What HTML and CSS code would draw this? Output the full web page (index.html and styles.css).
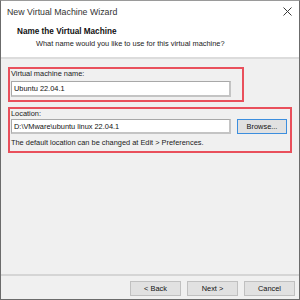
FILE: index.html
```html
<!DOCTYPE html>
<html lang="en">
<head>
    <meta charset="UTF-8">
    <meta name="viewport" content="width=device-width, initial-scale=1.0">
    <title>New Virtual Machine Wizard</title>
    <link rel="stylesheet" href="styles.css">
</head>
<body>
    <div class="window">
        <div class="titlebar">
            <span class="title">New Virtual Machine Wizard</span>
            <svg class="close" width="9" height="9" viewBox="0 0 9 9">
                <path d="M0.5 0.5 L8.5 8.5 M8.5 0.5 L0.5 8.5" stroke="#3a3a3a" stroke-width="1" fill="none"/>
            </svg>
        </div>
        <div class="header">
            <div class="heading">Name the Virtual Machine</div>
            <div class="subheading">What name would you like to use for this virtual machine?</div>
        </div>
        <div class="content">
            <div class="group group-name">
                <label for="vm-name">Virtual machine name:</label>
                <input type="text" id="vm-name" class="field-name" value="Ubuntu 22.04.1">
            </div>
            <div class="group group-location">
                <label for="location">Location:</label>
                <div class="row">
                    <input type="text" id="location" class="field-location" value="D:\VMware\ubuntu linux 22.04.1">
                    <button type="button" class="browse">Browse...</button>
                </div>
                <p class="hint">The default location can be changed at Edit &gt; Preferences.</p>
            </div>
        </div>
        <div class="footer">
            <button type="button">&lt; Back</button>
            <button type="button">Next &gt;</button>
            <button type="button">Cancel</button>
        </div>
    </div>
</body>
</html>
```

FILE: styles.css
```css
* {
    box-sizing: border-box;
}

body {
    margin: 0;
    font-family: "Liberation Sans", Arial, sans-serif;
    font-size: 7.4px;
    color: #1a1a1a;
}

.window {
    width: 300px;
    height: 300px;
    border: 1px solid #6b6b6b;
    border-top-color: #9a9a9a;
    background: #f0f0f0;
    display: flex;
    flex-direction: column;
}

.titlebar {
    height: 20px;
    background: white;
    display: flex;
    align-items: center;
    justify-content: space-between;
    padding: 1px 7px 0 6px;
}

.title {
    font-size: 8.8px;
    color: #333;
}

.header {
    height: 38px;
    background: white;
    border-bottom: 2px solid #dcdcdc;
    padding: 6px 0 0 16px;
}

.heading {
    font-weight: bold;
    font-size: 8.2px;
    line-height: 10px;
    color: #111;
}

.subheading {
    margin-top: 2px;
    padding-left: 19px;
    line-height: 9px;
    color: #222;
}

.content {
    flex: 1;
    padding: 8px 7px 0 7px;
}

.group {
    border: 2px solid #e9505c;
    padding: 0 2px 3px 1px;
}

.group-name {
    width: 236px;
    height: 35px;
}

.group-location {
    margin-top: 5px;
    width: 284px;
    height: 46px;
    padding-bottom: 4px;
}

label {
    display: block;
    line-height: 9px;
}

input {
    display: block;
    width: 220px;
    padding: 0 2px;
    border: 1px solid #a8a8a8;
    border-right: 2px solid #c4c4c4;
    border-bottom: 2px solid #c4c4c4;
    background: white;
    font-family: "Liberation Sans", Arial, sans-serif;
    font-size: 7.4px;
    color: #111;
}

.field-name {
    height: 16px;
    margin-top: 3px;
}

.field-location {
    height: 15px;
}

.row {
    display: flex;
    align-items: center;
    gap: 6px;
    margin-top: 1px;
}

.browse {
    width: 50px;
    height: 15px;
    border: 1px solid #3c8ede;
    background: #e1e1e1;
}

.hint {
    margin: 4px 0 0 0;
    line-height: 9px;
}

button {
    font-family: "Liberation Sans", Arial, sans-serif;
    font-size: 7.4px;
    color: #111;
    padding: 0;
}

.footer {
    height: 25px;
    border-top: 2px solid #d5d5d5;
    display: flex;
    justify-content: flex-end;
    align-items: flex-start;
    gap: 6px;
    padding: 5px 4px 0 0;
}

.footer button {
    width: 51px;
    height: 15px;
    border: 1px solid #c0c0c0;
    background: #e1e1e1;
}
```
